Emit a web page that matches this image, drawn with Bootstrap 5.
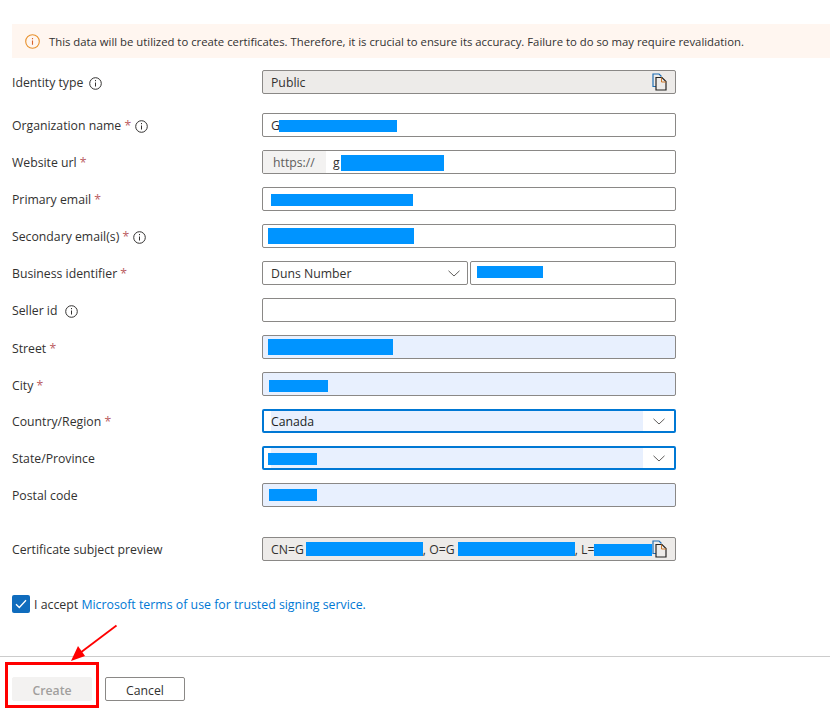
<!DOCTYPE html>
<html lang="en">
<head>
<meta charset="utf-8">
<title>Identity</title>
<link rel="stylesheet" href="https://cdn.jsdelivr.net/npm/bootstrap@5.3.0/dist/css/bootstrap.min.css">
<style>
html,body{height:712px;overflow:hidden}
body{background:#fff;font-family:"Open Sans","Noto Sans",sans-serif;font-size:12.25px;color:#323130;position:relative}
.page-top{padding:24px 0 0 12px}
.warn-bar{height:34px;background:#fff6f0;padding-left:13px;gap:9px;margin-bottom:12px;font-size:11.32px}
.warn-bar span,.lbl>span,.fld>span:not(.mask),.sel-fill,.accept-row>span:last-child{padding-top:2px}
.lbl>span.low{padding-top:4px}
.field-row{height:24px;margin-bottom:13px}
.field-row.first{margin-bottom:19px}
.field-row.gap-big{margin-bottom:30px}
.lbl{width:250px;flex:none;gap:4px}
.lbl svg{margin-top:2px}
.lbl.wide{gap:6px}
.req{color:#a4262c;opacity:.75}
.fld{width:414px;height:24px;flex:none;border:1px solid #8a8886;border-radius:2px;background:#fff;padding-left:8px;overflow:hidden;white-space:nowrap}
.fld.ro{background:#edebe9}
.fld.auto{background:#e8f0fe}
.fld.sel{border:2px solid #0078d4;padding:0 0 0 7px}
.sel-fill{flex:1;height:100%;background:#e8f0fe;color:#201f1e}
.sel-btn{width:31px;flex:none}
.copy-ic{margin-left:auto;margin-right:8px;flex:none}
.mask{display:inline-block;background:#0094ff;flex:none}
.h12{height:12px}.h16{height:16px}.h14{height:14px}
.m-org{width:118px;margin-top:2px;margin-left:-1px}
.m-web{width:103px;margin-top:2px;margin-left:1px}
.m-pri{width:142px;margin-top:2px}
.m-sec{width:146px;margin-left:-3px}
.m-biz{width:66px;margin-left:0;margin-top:-2px}
.m-str{width:125px;margin-left:-3px}
.m-cty{width:59px;margin-left:-2px;margin-top:4px}
.m-sta{width:49px;margin-left:-3px}
.m-pos{width:48px;margin-left:-2px}
.m-c1{width:117px;margin-left:2px}.m-c2{width:117px;margin-left:3px}.m-c3{width:58px;margin-top:2px}
.proto{background:#f3f2f1;width:63px;height:100%;margin-left:-8px;padding-left:10px;color:#605e5c;flex:none}
.proto+span{margin-left:7px}
.biz-sel{width:206px;justify-content:space-between;padding-right:7px}
.biz-in{width:206px;margin-left:2px;padding-left:6px}
.accept-row{margin-top:34px;gap:4px;height:18px;font-size:12.33px}
.chk{width:18px;height:18px;background:#0f6cbd;border-radius:2px;flex:none}
.ms-link{color:#0078d4;text-decoration:none}
.foot-rule{position:absolute;left:0;right:0;top:656px;border-top:1px solid #ccc}
.foot-bar{position:absolute;left:12px;top:677px;gap:13px}
.act{width:80px;height:24px;border-radius:2px;font-size:12.25px;padding:3px 0 0;line-height:19px}
.act-dis{background:#f3f2f1;border:1px solid #f3f2f1;color:#a19f9d;font-weight:600}
.act-can{background:#fff;border:1px solid #8a8886;color:#323130}
.red-box{position:absolute;left:5px;top:662px;width:94px;height:46px;border:3px solid #f00}
.red-arrow{position:absolute;left:60px;top:615px}
</style>
</head>
<body>
<div class="page-top">
  <div class="warn-bar d-flex align-items-center">
    <svg width="15" height="15" viewBox="0 0 15 15"><circle cx="7.5" cy="7.5" r="6.8" fill="none" stroke="#e8912d" stroke-width="1.1"/><path d="M7.5 6.5v4.2M7.5 4v1.2" stroke="#d9622b" stroke-width="1.1"/></svg>
    <span>This data will be utilized to create certificates. Therefore, it is crucial to ensure its accuracy. Failure to do so may require revalidation.</span>
  </div>

  <div class="field-row first d-flex align-items-center">
    <div class="lbl wide d-flex align-items-center"><span>Identity type</span><svg width="13" height="13" viewBox="0 0 13 13"><circle cx="6.5" cy="6.5" r="5.8" fill="none" stroke="#323130"/><path d="M6.5 5.5v4M6.5 3v1.2" stroke="#323130"/></svg></div>
    <div class="fld ro d-flex align-items-center"><span>Public</span>
      <svg class="copy-ic" width="15" height="18" viewBox="0 0 15 18"><path d="M4 13.5H1V1h6l2.5 2.5" fill="none" stroke="#1f6fb5" stroke-width="1.2"/><path d="M4 4.5h6l4 4v8.5H4z" fill="#edebe9" stroke="#252423" stroke-width="1.2"/><path d="M9.5 4.5v4.5H14" fill="none" stroke="#c9772b"/></svg>
    </div>
  </div>

  <div class="field-row d-flex align-items-center">
    <div class="lbl d-flex align-items-center"><span>Organization name <span class="req">*</span></span><svg width="13" height="13" viewBox="0 0 13 13"><circle cx="6.5" cy="6.5" r="5.8" fill="none" stroke="#323130"/><path d="M6.5 5.5v4M6.5 3v1.2" stroke="#323130"/></svg></div>
    <div class="fld d-flex align-items-center"><span>G</span><span class="mask m-org h12"></span></div>
  </div>

  <div class="field-row d-flex align-items-center">
    <div class="lbl d-flex"><span>Website url <span class="req">*</span></span></div>
    <div class="fld d-flex align-items-center"><span class="proto d-flex align-items-center">https://</span><span>g</span><span class="mask m-web h16"></span></div>
  </div>

  <div class="field-row d-flex align-items-center">
    <div class="lbl d-flex"><span>Primary email <span class="req">*</span></span></div>
    <div class="fld d-flex align-items-center"><span class="mask m-pri h12"></span></div>
  </div>

  <div class="field-row d-flex align-items-center">
    <div class="lbl d-flex align-items-center"><span>Secondary email(s) <span class="req">*</span></span><svg width="13" height="13" viewBox="0 0 13 13"><circle cx="6.5" cy="6.5" r="5.8" fill="none" stroke="#323130"/><path d="M6.5 5.5v4M6.5 3v1.2" stroke="#323130"/></svg></div>
    <div class="fld d-flex align-items-center"><span class="mask m-sec h16"></span></div>
  </div>

  <div class="field-row d-flex align-items-center">
    <div class="lbl d-flex"><span>Business identifier <span class="req">*</span></span></div>
    <div class="fld biz-sel d-flex align-items-center"><span>Duns Number</span><svg width="12" height="7" viewBox="0 0 12 7"><path d="M.5.8 6 6 11.5.8" fill="none" stroke="#605e5c"/></svg></div>
    <div class="fld biz-in d-flex align-items-center"><span class="mask m-biz h12"></span></div>
  </div>

  <div class="field-row d-flex align-items-center">
    <div class="lbl d-flex align-items-center"><span>Seller id</span><svg class="ms-1" width="13" height="13" viewBox="0 0 13 13"><circle cx="6.5" cy="6.5" r="5.8" fill="none" stroke="#323130"/><path d="M6.5 5.5v4M6.5 3v1.2" stroke="#323130"/></svg></div>
    <div class="fld"></div>
  </div>

  <div class="field-row d-flex align-items-center">
    <div class="lbl d-flex"><span class="low">Street <span class="req">*</span></span></div>
    <div class="fld auto d-flex align-items-center"><span class="mask m-str h16"></span></div>
  </div>

  <div class="field-row d-flex align-items-center">
    <div class="lbl d-flex"><span class="low">City <span class="req">*</span></span></div>
    <div class="fld auto d-flex align-items-center"><span class="mask m-cty h12"></span></div>
  </div>

  <div class="field-row d-flex align-items-center">
    <div class="lbl d-flex"><span>Country/Region <span class="req">*</span></span></div>
    <div class="fld sel d-flex align-items-center"><div class="sel-fill d-flex align-items-center">Canada</div><div class="sel-btn d-flex justify-content-center"><svg width="12" height="7" viewBox="0 0 12 7"><path d="M.5.8 6 6 11.5.8" fill="none" stroke="#605e5c"/></svg></div></div>
  </div>

  <div class="field-row d-flex align-items-center">
    <div class="lbl d-flex"><span>State/Province</span></div>
    <div class="fld sel d-flex align-items-center"><div class="sel-fill d-flex align-items-center"><span class="mask m-sta h12"></span></div><div class="sel-btn d-flex justify-content-center"><svg width="12" height="7" viewBox="0 0 12 7"><path d="M.5.8 6 6 11.5.8" fill="none" stroke="#605e5c"/></svg></div></div>
  </div>

  <div class="field-row gap-big d-flex align-items-center">
    <div class="lbl d-flex"><span>Postal code</span></div>
    <div class="fld auto d-flex align-items-center"><span class="mask m-pos h12"></span></div>
  </div>

  <div class="field-row d-flex align-items-center">
    <div class="lbl d-flex"><span>Certificate subject preview</span></div>
    <div class="fld ro d-flex align-items-center"><span>CN=G</span><span class="mask m-c1 h14"></span><span>, O=G</span><span class="mask m-c2 h14"></span><span>, L=</span><span class="mask m-c3 h12"></span>
      <svg class="copy-ic" width="15" height="18" viewBox="0 0 15 18"><path d="M4 13.5H1V1h6l2.5 2.5" fill="none" stroke="#1f6fb5" stroke-width="1.2"/><path d="M4 4.5h6l4 4v8.5H4z" fill="#edebe9" stroke="#252423" stroke-width="1.2"/><path d="M9.5 4.5v4.5H14" fill="none" stroke="#c9772b"/></svg>
    </div>
  </div>

  <div class="accept-row d-flex align-items-center">
    <span class="chk d-flex align-items-center justify-content-center"><svg width="12" height="10" viewBox="0 0 12 10"><path d="M1 5.2 4.3 8.5 11 1.2" fill="none" stroke="#fff" stroke-width="1.3"/></svg></span>
    <span>I accept <a href="#" class="ms-link">Microsoft terms of use for trusted signing service.</a></span>
  </div>
</div>

<div class="foot-rule"></div>
<div class="foot-bar d-flex">
  <button type="button" class="act act-dis" disabled>Create</button>
  <button type="button" class="act act-can">Cancel</button>
</div>
<div class="red-box"></div>
<svg class="red-arrow" width="60" height="50" viewBox="0 0 60 50"><path d="M56.5 10.5 16 41" stroke="#f00" stroke-width="1.8"/><path d="M11 46 25 41 18 31z" fill="#f00"/></svg>

<script src="https://cdn.jsdelivr.net/npm/bootstrap@5.3.0/dist/js/bootstrap.bundle.min.js"></script>
</body>
</html>
